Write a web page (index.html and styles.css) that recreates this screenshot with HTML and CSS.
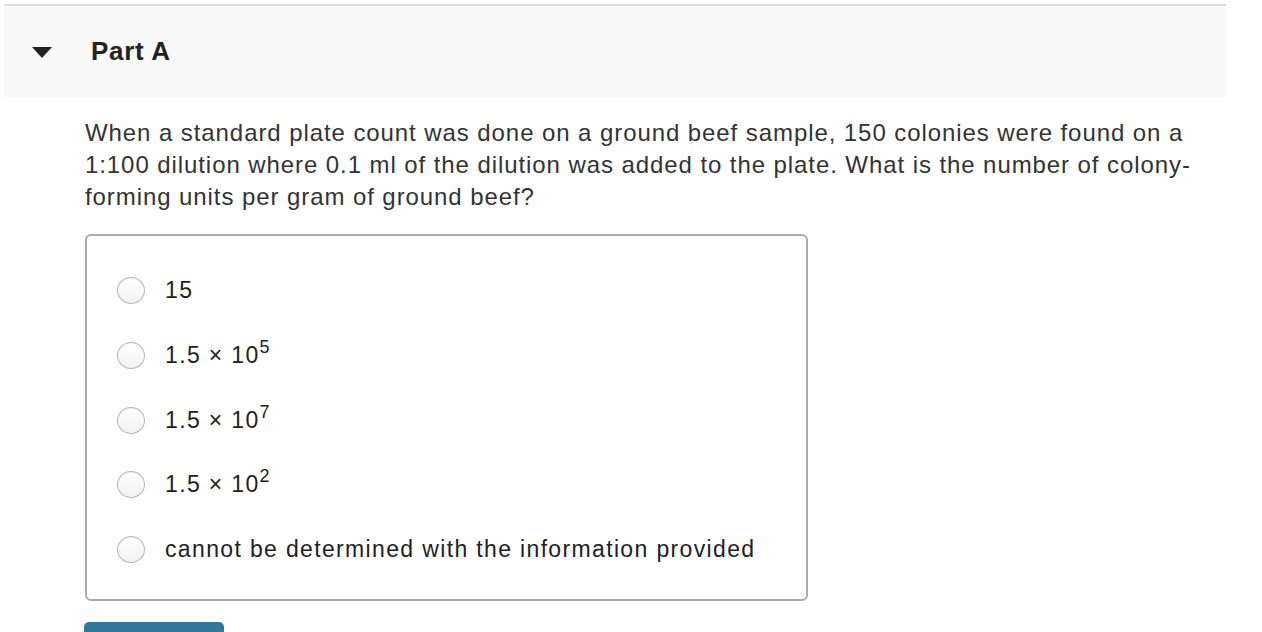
FILE: index.html
```html
<!DOCTYPE html>
<html>
<head>
<meta charset="utf-8">
<link rel="stylesheet" href="styles.css">
</head>
<body>
<div class="part">
  <div class="part-header">
    <span class="caret"></span>
    <h2 class="part-title">Part A</h2>
  </div>
  <div class="part-body">
    <p class="question">When a standard plate count was done on a ground beef sample, 150 colonies were found on a 1:100 dilution where 0.1 ml of the dilution was added to the plate. What is the number of colony-forming units per gram of ground beef?</p>
    <div class="options">
      <label class="option"><span class="radio"></span><span class="opt-text">15</span></label>
      <label class="option"><span class="radio"></span><span class="opt-text">1.5 × 10<sup>5</sup></span></label>
      <label class="option"><span class="radio"></span><span class="opt-text">1.5 × 10<sup>7</sup></span></label>
      <label class="option"><span class="radio"></span><span class="opt-text">1.5 × 10<sup>2</sup></span></label>
      <label class="option"><span class="radio"></span><span class="opt-text">cannot be determined with the information provided</span></label>
    </div>
    <div class="submit"></div>
  </div>
</div>
</body>
</html>
```
FILE: styles.css
```css
html, body {
  margin: 0;
  padding: 0;
  background: #fff;
  font-family: "Liberation Sans", Arial, sans-serif;
  color: #333;
}
.part {
  margin: 4px 0 0 4px;
  width: 1222px;
}
.part-header {
  border-top: 2px solid #dcdcdc;
  background: #f9f9f9;
  height: 91px;
  display: flex;
  align-items: center;
}
.caret {
  width: 0;
  height: 0;
  border-left: 10.5px solid transparent;
  border-right: 10.5px solid transparent;
  border-top: 11px solid #222;
  margin-left: 28px;
  margin-top: 2px;
}
.part-title {
  margin: 0 0 0 39px;
  font-size: 26px;
  letter-spacing: 0.7px;
  font-weight: bold;
  color: #222;
}
.part-body {
  padding: 20px 0 0 81px;
}
.question {
  margin: 0;
  font-size: 24px;
  letter-spacing: 0.92px;
  line-height: 32px;
  color: #333;
  width: 1120px;
}
.options {
  margin-top: 21px;
  width: 723px;
  height: 367px;
  border: 2px solid #aaa;
  border-radius: 6px;
  box-sizing: border-box;
  display: flex;
  flex-direction: column;
  padding: 42px 0 0 30px;
  gap: 39.8px;
}
.option {
  display: flex;
  align-items: center;
  height: 25px;
}
.radio {
  width: 28px;
  height: 27px;
  border-radius: 50%;
  border: 1px solid #b8b8b8;
  box-sizing: border-box;
  background: linear-gradient(#fff, #f2f2f2);
  box-shadow: inset 0 1px 1px rgba(0,0,0,0.05);
  flex: none;
}
.opt-text {
  margin-left: 20px;
  font-size: 23px;
  letter-spacing: 1.35px;
  color: #222;
}
sup {
  font-size: 18px;
  letter-spacing: 0;
  line-height: 0;
  vertical-align: 10px;
}
.submit {
  margin-top: 21px;
  margin-left: -1px;
  width: 140px;
  height: 40px;
  background: #2f7899;
  border-radius: 5px 5px 0 0;
}
```
